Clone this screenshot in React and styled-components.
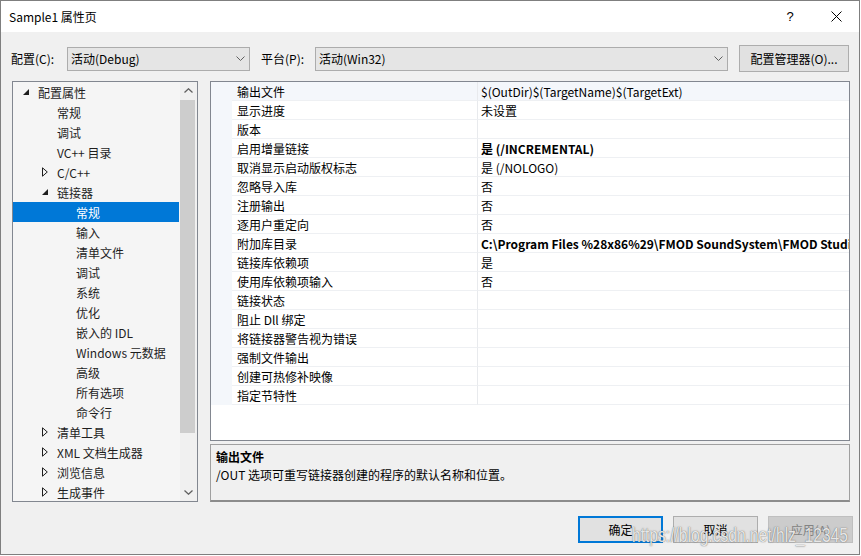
import React from 'react';
import styled, { createGlobalStyle } from 'styled-components';

const GlobalStyle = createGlobalStyle`
  html, body {
    margin: 0;
    padding: 0;
    background: #ffffff;
  }
  body {
    font-family: "Noto Sans CJK SC", "Noto Sans", sans-serif;
    font-size: 12px;
    color: #000;
  }
  * {
    box-sizing: border-box;
  }
`;

const Window = styled.div`
  position: relative;
  width: 860px;
  height: 555px;
  border: 1px solid #7f7f7f;
  background: #f0f0f0;
  display: flex;
  flex-direction: column;
  overflow: hidden;
`;

const TitleBar = styled.div`
  height: 31px;
  background: #ffffff;
  display: flex;
  align-items: center;
  flex-shrink: 0;
`;

const Title = styled.div`
  flex: 1;
  padding-left: 8px;
  font-size: 12px;
  color: #000;
`;

const TitleButton = styled.div`
  width: 46px;
  height: 31px;
  display: flex;
  align-items: center;
  justify-content: center;
  font-family: "Liberation Sans", sans-serif;
  font-size: 13px;
  color: #000;
`;

const Body = styled.div`
  flex: 1;
  display: flex;
  flex-direction: column;
  padding-top: 13px;
`;

const ConfigRow = styled.div`
  height: 27px;
  display: flex;
  align-items: center;
  padding-left: 10px;
`;

const Label = styled.div`
  width: ${(p) => p.$w}px;
  margin-left: ${(p) => p.$ml || 0}px;
  flex-shrink: 0;
`;

const Combo = styled.div`
  width: ${(p) => p.$w}px;
  height: 24px;
  background: #e5e5e5;
  border: 1px solid #acacac;
  display: flex;
  align-items: center;
  padding: 0 4px 0 3px;
  flex-shrink: 0;
`;

const ComboText = styled.div`
  flex: 1;
`;

const PushButton = styled.div`
  width: ${(p) => p.$w}px;
  height: 27px;
  margin-left: ${(p) => p.$ml || 0}px;
  display: flex;
  align-items: center;
  justify-content: center;
  flex-shrink: 0;
  background: ${(p) => (p.$disabled ? '#cccccc' : '#e1e1e1')};
  border: ${(p) =>
    p.$default ? '2px solid #0078d7' : p.$disabled ? '1px solid #bfbfbf' : '1px solid #adadad'};
  color: ${(p) => (p.$disabled ? '#838383' : '#000')};
`;

const Main = styled.div`
  height: 421px;
  margin-top: 9px;
  padding: 0 9px 0 11px;
  display: flex;
  gap: 12px;
`;

const TreePanel = styled.div`
  width: 186px;
  height: 100%;
  border: 1px solid #828790;
  background: #f5f5f5;
  display: flex;
  overflow: hidden;
`;

const TreeList = styled.div`
  flex: 1;
  overflow: hidden;
`;

const TreeRow = styled.div`
  height: 20px;
  display: flex;
  align-items: center;
  padding-left: ${(p) => 10 + p.$level * 19}px;
  margin-right: 1px;
  background: ${(p) => (p.$selected ? '#0078d7' : 'transparent')};
  color: ${(p) => (p.$selected ? '#ffffff' : '#1e1e1e')};
  white-space: nowrap;
`;

const Expander = styled.div`
  width: 15px;
  height: 20px;
  display: flex;
  align-items: center;
  flex-shrink: 0;
`;

const ScrollBar = styled.div`
  width: 17px;
  background: #f0f0f0;
  display: flex;
  flex-direction: column;
  flex-shrink: 0;
`;

const ScrollArrow = styled.div`
  height: 17px;
  display: flex;
  align-items: center;
  justify-content: center;
  flex-shrink: 0;
`;

const ScrollTrack = styled.div`
  flex: 1;
  padding: 1px 2px 0 0;
`;

const Thumb = styled.div`
  height: 333px;
  background: #cdcdcd;
`;

const RightCol = styled.div`
  flex: 1;
  display: flex;
  flex-direction: column;
  gap: 3px;
`;

const Grid = styled.div`
  height: 360px;
  border: 1px solid #828790;
  background: #ffffff;
  overflow: hidden;
`;

const GridRow = styled.div`
  height: 19px;
  display: grid;
  grid-template-columns: 21px 246px 1fr;
  background: ${(p) => (p.$current ? '#f4f7fb' : '#ffffff')};
`;

const Margin = styled.div`
  background: #f4f7fb;
`;

const Cell = styled.div`
  height: 19px;
  line-height: 19px;
  padding-left: ${(p) => p.$pl}px;
  border-bottom: 1px solid #eef0f3;
  border-right: ${(p) => (p.$sep ? '1px solid #e8eaed' : 'none')};
  font-weight: ${(p) => (p.$bold ? 700 : 400)};
  white-space: nowrap;
  overflow: hidden;
`;

const Desc = styled.div`
  height: 58px;
  border: 1px solid #a0a0a0;
  border-bottom: 2px solid #8c8c8c;
  background: #f0f0f0;
  padding: 3px 5px 0;
  line-height: 18px;
`;

const DescTitle = styled.div`
  font-weight: 700;
`;

const Footer = styled.div`
  display: flex;
  justify-content: flex-end;
  gap: 10px;
  padding: 14px 6px 0 0;
`;

const Watermark = styled.div`
  position: absolute;
  left: 631px;
  top: 523px;
  font-family: "Liberation Sans", sans-serif;
  font-size: 20px;
  white-space: nowrap;
  color: rgba(255, 255, 255, 0.85);
  text-shadow: 0 0 1px rgba(70, 70, 70, 0.8), 0 0 2px rgba(120, 120, 120, 0.5);
  transform: scaleX(0.78);
  transform-origin: left top;
  pointer-events: none;
`;

const Chevron = ({ up }) => (
  <svg width="9" height="5" viewBox="0 0 9 5">
    <path
      d={up ? 'M0.5 4.5 L4.5 0.8 L8.5 4.5' : 'M0.5 0.5 L4.5 4.2 L8.5 0.5'}
      fill="none"
      stroke="#606060"
      strokeWidth="1.3"
    />
  </svg>
);

const ComboChevron = () => (
  <svg width="9" height="5" viewBox="0 0 9 5">
    <path d="M0.5 0.5 L4.5 4.5 L8.5 0.5" fill="none" stroke="#606060" strokeWidth="1" />
  </svg>
);

const ExpandIcon = ({ open }) =>
  open ? (
    <svg width="6" height="6" viewBox="0 0 6 6">
      <path d="M6 0 L6 6 L0 6 Z" fill="#1e1e1e" />
    </svg>
  ) : (
    <svg width="6" height="10" viewBox="0 0 6 10">
      <path d="M0.5 0.8 L5.3 5 L0.5 9.2 Z" fill="none" stroke="#1e1e1e" strokeWidth="1" />
    </svg>
  );

const CloseIcon = () => (
  <svg width="11" height="11" viewBox="0 0 11 11">
    <path d="M0.5 0.5 L10.5 10.5 M10.5 0.5 L0.5 10.5" stroke="#000" strokeWidth="1" />
  </svg>
);

const tree = [
  { text: '配置属性', level: 0, state: 'open' },
  { text: '常规', level: 1 },
  { text: '调试', level: 1 },
  { text: 'VC++ 目录', level: 1 },
  { text: 'C/C++', level: 1, state: 'closed' },
  { text: '链接器', level: 1, state: 'open' },
  { text: '常规', level: 2, selected: true },
  { text: '输入', level: 2 },
  { text: '清单文件', level: 2 },
  { text: '调试', level: 2 },
  { text: '系统', level: 2 },
  { text: '优化', level: 2 },
  { text: '嵌入的 IDL', level: 2 },
  { text: 'Windows 元数据', level: 2 },
  { text: '高级', level: 2 },
  { text: '所有选项', level: 2 },
  { text: '命令行', level: 2 },
  { text: '清单工具', level: 1, state: 'closed' },
  { text: 'XML 文档生成器', level: 1, state: 'closed' },
  { text: '浏览信息', level: 1, state: 'closed' },
  { text: '生成事件', level: 1, state: 'closed' },
];

const props = [
  { name: '输出文件', value: '$(OutDir)$(TargetName)$(TargetExt)' },
  { name: '显示进度', value: '未设置' },
  { name: '版本', value: '' },
  { name: '启用增量链接', value: '是 (/INCREMENTAL)', bold: true },
  { name: '取消显示启动版权标志', value: '是 (/NOLOGO)' },
  { name: '忽略导入库', value: '否' },
  { name: '注册输出', value: '否' },
  { name: '逐用户重定向', value: '否' },
  { name: '附加库目录', value: 'C:\\Program Files %28x86%29\\FMOD SoundSystem\\FMOD Studio API Windows\\api\\lowlevel\\lib', bold: true },
  { name: '链接库依赖项', value: '是' },
  { name: '使用库依赖项输入', value: '否' },
  { name: '链接状态', value: '' },
  { name: '阻止 Dll 绑定', value: '' },
  { name: '将链接器警告视为错误', value: '' },
  { name: '强制文件输出', value: '' },
  { name: '创建可热修补映像', value: '' },
  { name: '指定节特性', value: '' },
];

export default function App() {
  return (
    <>
      <GlobalStyle />
      <Window>
        <TitleBar>
          <Title>Sample1 属性页</Title>
          <TitleButton>?</TitleButton>
          <TitleButton>
            <CloseIcon />
          </TitleButton>
        </TitleBar>
        <Body>
          <ConfigRow>
            <Label $w={56}>配置(C):</Label>
            <Combo $w={183}>
              <ComboText>活动(Debug)</ComboText>
              <ComboChevron />
            </Combo>
            <Label $w={54} $ml={11}>平台(P):</Label>
            <Combo $w={413}>
              <ComboText>活动(Win32)</ComboText>
              <ComboChevron />
            </Combo>
            <PushButton $w={110} $ml={11}>配置管理器(O)...</PushButton>
          </ConfigRow>
          <Main>
            <TreePanel>
              <TreeList>
                {tree.map((item, i) => (
                  <TreeRow key={i} $level={item.level} $selected={item.selected}>
                    <Expander>{item.state && <ExpandIcon open={item.state === 'open'} />}</Expander>
                    {item.text}
                  </TreeRow>
                ))}
              </TreeList>
              <ScrollBar>
                <ScrollArrow>
                  <Chevron up />
                </ScrollArrow>
                <ScrollTrack>
                  <Thumb />
                </ScrollTrack>
                <ScrollArrow>
                  <Chevron />
                </ScrollArrow>
              </ScrollBar>
            </TreePanel>
            <RightCol>
              <Grid>
                {props.map((row, i) => (
                  <GridRow key={i} $current={i === 0}>
                    <Margin />
                    <Cell $pl={5} $sep>{row.name}</Cell>
                    <Cell $pl={3} $bold={row.bold}>{row.value}</Cell>
                  </GridRow>
                ))}
              </Grid>
              <Desc>
                <DescTitle>输出文件</DescTitle>
                <div>/OUT 选项可重写链接器创建的程序的默认名称和位置。</div>
              </Desc>
            </RightCol>
          </Main>
          <Footer>
            <PushButton $w={85} $default>确定</PushButton>
            <PushButton $w={85}>取消</PushButton>
            <PushButton $w={85} $disabled>应用(A)</PushButton>
          </Footer>
        </Body>
        <Watermark>https://blog.csdn.net/hlz_12345</Watermark>
      </Window>
    </>
  );
}
